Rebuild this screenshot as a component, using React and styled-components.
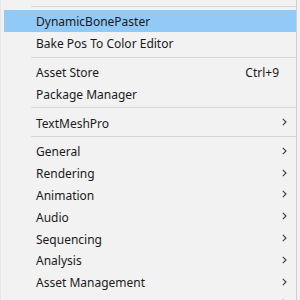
import React from "react";
import styled, { createGlobalStyle } from "styled-components";

const GlobalStyle = createGlobalStyle`
  html, body {
    margin: 0;
    padding: 0;
    background: #f2f2f2;
    overflow: hidden;
  }
`;

const groups = [
  [
    { label: "DynamicBonePaster", active: true },
    { label: "Bake Pos To Color Editor" },
  ],
  [
    { label: "Asset Store", shortcut: "Ctrl+9" },
    { label: "Package Manager" },
  ],
  [{ label: "TextMeshPro", sub: true }],
  [
    { label: "General", sub: true },
    { label: "Rendering", sub: true },
    { label: "Animation", sub: true },
    { label: "Audio", sub: true },
    { label: "Sequencing", sub: true },
    { label: "Analysis", sub: true },
    { label: "Asset Management", sub: true },
    { label: "2D", sub: true },
  ],
];

const Chevron = () => (
  <svg width="5" height="8" viewBox="0 0 5 8">
    <path d="M0.8 0.8 L4 4 L0.8 7.2" fill="none" stroke="#3c3c3c" strokeWidth="1.1" />
  </svg>
);

const Menu = () => (
  <MenuPanel>
    {groups.map((group, gi) => (
      <React.Fragment key={gi}>
        <Separator />
        {group.map((item) => (
          <Item key={item.label} $active={item.active}>
            <Label>{item.label}</Label>
            {item.shortcut && <Shortcut>{item.shortcut}</Shortcut>}
            {item.sub && (
              <Arrow>
                <Chevron />
              </Arrow>
            )}
          </Item>
        ))}
      </React.Fragment>
    ))}
  </MenuPanel>
);

export default function App() {
  return (
    <>
      <GlobalStyle />
      <Menu />
    </>
  );
}

const MenuPanel = styled.div`
  width: 297px;
  height: 300px;
  box-sizing: border-box;
  padding: 3px 0 0 3px;
  background: #f2f2f2;
  border-right: 1px solid #cfcfcf;
  border-left: 1px solid #e6e6e6;
  display: flex;
  flex-direction: column;
  overflow: hidden;
  font-family: "Noto Sans", "Open Sans", sans-serif;
  font-size: 12px;
  color: #1a1a1a;
`;

const Separator = styled.div`
  flex: 0 0 7px;
  display: flex;
  align-items: center;
  padding-left: 27px;
  &::after {
    content: "";
    flex: 1;
    height: 1px;
    background: #d7d7d7;
  }
`;

const Item = styled.div`
  flex: 0 0 21.8px;
  display: flex;
  align-items: center;
  padding-left: 32px;
  padding-right: 8px;
  background: ${(p) => (p.$active ? "#91c9f7" : "transparent")};
  white-space: nowrap;
`;

const Label = styled.span`
  flex: 1;
  padding-top: 2px;
`;

const Shortcut = styled.span`
  margin-right: 9px;
  padding-top: 2px;
`;

const Arrow = styled.span`
  display: flex;
  align-items: center;
  margin-right: 1px;
`;
